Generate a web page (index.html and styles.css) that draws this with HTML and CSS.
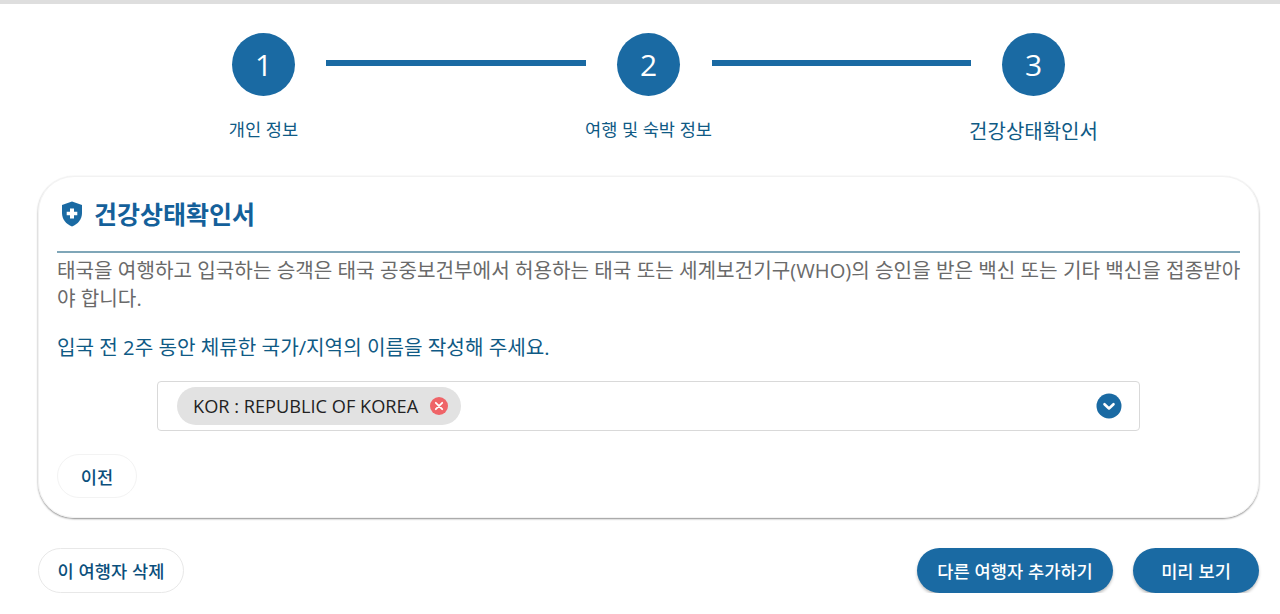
FILE: index.html
```html
<!DOCTYPE html>
<html lang="ko">
<head>
<meta name="viewport" content="width=device-width, initial-scale=1">
<link rel="stylesheet" href="styles.css">
</head>
<body>

<div class="topbar"></div>

<div class="steps">
  <div class="step-circle">1</div>
  <div class="step-line"></div>
  <div class="step-circle">2</div>
  <div class="step-line second"></div>
  <div class="step-circle">3</div>
</div>

<div class="step-labels">
  <div class="step-label">개인 정보</div>
  <div class="step-label">여행 및 숙박 정보</div>
  <div class="step-label current">건강상태확인서</div>
</div>

<div class="card">
  <div class="card-title">
    <svg class="shield" viewBox="0 0 22 26" width="22" height="26">
      <path fill="#1a6aa3" d="M11 0.5 L21 4 V12 C21 18.5 16.8 23.2 11 25.5 C5.2 23.2 1 18.5 1 12 V4 Z"/>
      <path fill="#fff" d="M9 7.5 H13 V10.8 H16.3 V14.2 H13 V17.5 H9 V14.2 H5.7 V10.8 H9 Z"/>
    </svg>
    <h2>건강상태확인서</h2>
  </div>
  <p class="notice">태국을 여행하고 입국하는 승객은 태국 공중보건부에서 허용하는 태국 또는 세계보건기구(WHO)의 승인을 받은 백신 또는 기타 백신을 접종받아야 합니다.</p>
  <p class="question">입국 전 2주 동안 체류한 국가/지역의 이름을 작성해 주세요.</p>

  <div class="select-box">
    <div class="chip">
      <span>KOR : REPUBLIC OF KOREA</span>
      <svg viewBox="0 0 18 18" width="18" height="18">
        <circle cx="9" cy="9" r="9" fill="#ef6468"/>
        <path d="M5.8 5.8 L12.2 12.2 M12.2 5.8 L5.8 12.2" stroke="#fff" stroke-width="1.8" stroke-linecap="round"/>
      </svg>
    </div>
    <svg class="arrow" viewBox="0 0 26 26" width="26" height="26">
      <circle cx="13" cy="13" r="12.5" fill="#1a6aa3"/>
      <path d="M8.5 11.2 L13 15.5 L17.5 11.2" fill="none" stroke="#fff" stroke-width="2.6" stroke-linecap="round" stroke-linejoin="round"/>
    </svg>
  </div>

  <button class="btn btn-light btn-back">이전</button>
</div>

<div class="actions">
  <button class="btn btn-light btn-delete">이 여행자 삭제</button>
  <div class="actions-right">
    <button class="btn btn-blue btn-add">다른 여행자 추가하기</button>
    <button class="btn btn-blue btn-preview">미리 보기</button>
  </div>
</div>

</body>
</html>
```

FILE: styles.css
```css
body {
  margin: 0;
  background-color: #fff;
  font-family: "Open Sans", "Noto Sans CJK KR", sans-serif;
  overflow: hidden;
}

.topbar {
  height: 4px;
  background-color: #dedede;
}

/* Stepper */
.steps {
  display: flex;
  align-items: flex-start;
  padding-left: 232px;
  margin-top: 29px;
}

.step-circle {
  width: 63px;
  height: 63px;
  border-radius: 50%;
  background-color: #1a6aa3;
  color: #fff;
  font-size: 30px;
  line-height: 63px;
  text-align: center;
}

.step-line {
  width: 260px;
  height: 6px;
  margin: 27px 31px 0;
  background-color: #1a6aa3;
}

.step-line.second {
  width: 259px;
  margin-left: 32px;
}

.step-labels {
  display: grid;
  grid-template-columns: repeat(3, 385px);
  height: 62px;
  margin-top: 18px;
  padding-left: 71px;
}

.step-label {
  padding-top: 3px;
  color: #0f5a85;
  font-size: 17.6px;
  line-height: 24px;
  text-align: center;
}

.step-label.current {
  padding-top: 6px;
  font-size: 20px;
}

/* Card */
.card {
  box-sizing: border-box;
  width: 1221px;
  height: 342px;
  margin-left: 38px;
  padding: 0 18px;
  border-radius: 36px;
  border: 1px solid #f2f2f2;
  box-shadow: 0 1px 2px rgba(0,0,0,0.45);
}

.card-title {
  display: flex;
  align-items: center;
  gap: 11px;
  height: 71px;
  padding: 0 0 3px 4px;
  border-bottom: 2px solid #7fa6b8;
}

.card-title h2 {
  margin: 0;
  color: #14609a;
  font-size: 25px;
  font-weight: 700;
}

.shield {
  margin-top: 2px;
}

.notice {
  margin: 3px -4px 0 0;
  color: #6a6a6a;
  font-size: 20.16px;
  line-height: 28px;
}

.question {
  margin: 21px 0 0;
  color: #0f5a85;
  font-size: 20.16px;
  line-height: 28px;
}

.select-box {
  box-sizing: border-box;
  display: flex;
  align-items: center;
  justify-content: space-between;
  width: 983px;
  height: 50px;
  margin: 20px 0 0 100px;
  padding: 0 17px 0 19px;
  border: 1px solid #d9d9d9;
  border-radius: 4px;
}

.chip {
  display: flex;
  align-items: center;
  gap: 12px;
  height: 38px;
  padding: 0 13px 0 16px;
  border-radius: 19px;
  background-color: #e2e2e2;
  color: #222;
  font-size: 18.2px;
}

/* Buttons */
.btn {
  box-sizing: border-box;
  height: 45px;
  border-radius: 23px;
  font-family: "Noto Sans CJK KR", sans-serif;
  font-size: 17.6px;
  font-weight: 500;
  cursor: pointer;
}

.btn-light {
  border: 1px solid #e8e8e8;
  background-color: #fff;
  color: #0b4f7c;
}

.btn-blue {
  border: none;
  background-color: #1a6aa3;
  color: #fff;
  box-shadow: 0 2px 3px rgba(0,0,0,0.25);
}

.btn-back {
  display: block;
  width: 80px;
  height: 44px;
  margin-top: 23px;
  border-color: #f3f3f3;
}

.btn-delete {
  width: 146px;
}

.btn-add {
  width: 196px;
}

.btn-preview {
  width: 126px;
}

.actions {
  display: flex;
  justify-content: space-between;
  width: 1221px;
  margin: 30px 0 0 38px;
}

.actions-right {
  display: flex;
  gap: 20px;
}
```
